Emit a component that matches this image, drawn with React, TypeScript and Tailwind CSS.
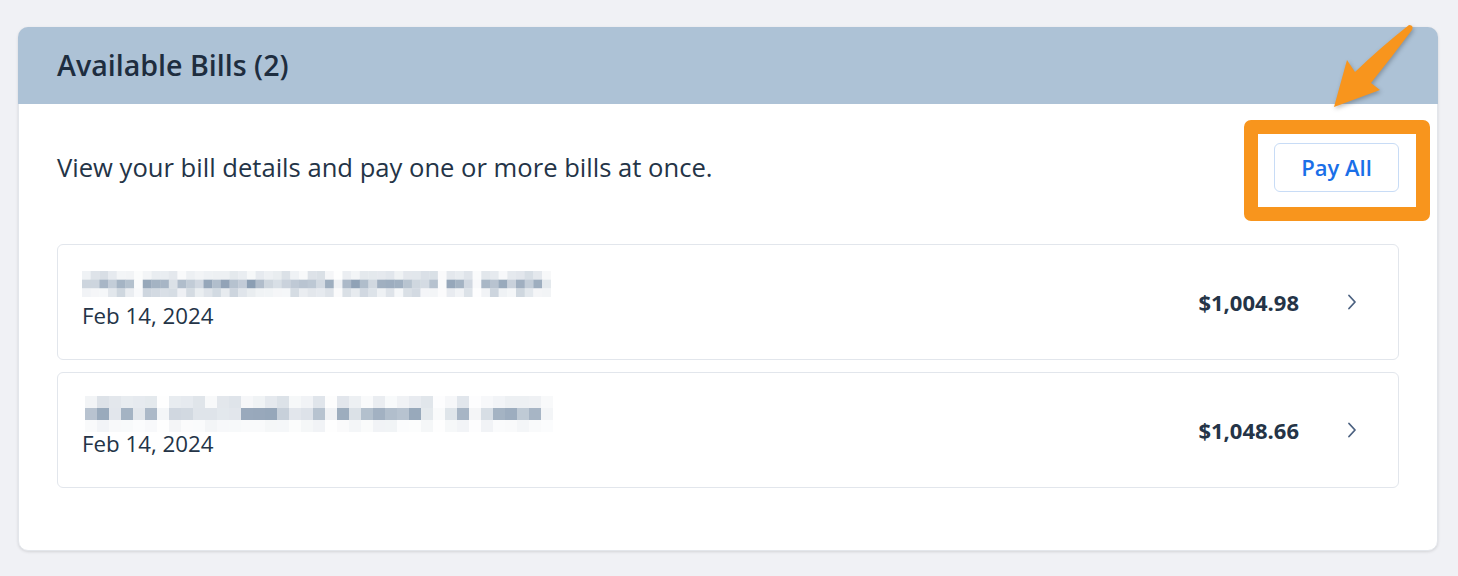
import React from "react";

const rand = (i: number, r: number, s: number) => {
  const x = Math.sin(i * 12.9898 + r * 78.233 + s * 37.719) * 43758.5453;
  return x - Math.floor(x);
};

const mix = (t: number) => {
  const d = [138, 157, 178];
  const c = d.map((v) => Math.round(255 + (v - 255) * t));
  return `rgb(${c[0]},${c[1]},${c[2]})`;
};

type BlurProps = {
  cols: number;
  size: number;
  seed: number;
  ranges: [number, number][];
  gaps: number[];
};

function Blur({ cols, size, seed, ranges, gaps }: BlurProps) {
  const rects: React.ReactNode[] = [];
  for (let r = 0; r < 3; r++) {
    for (let i = 0; i < cols; i++) {
      const [lo, hi] = ranges[r];
      let t = lo + (hi - lo) * rand(i, r, seed);
      if (gaps.includes(i)) t *= 0.15;
      if (i === cols - 1) t *= 0.3;
      rects.push(
        <rect
          key={`${r}-${i}`}
          x={i * size}
          y={r * size}
          width={size + 0.3}
          height={size + 0.3}
          fill={mix(t)}
        />
      );
    }
  }
  return (
    <svg width={cols * size} height={3 * size} className="block">
      {rects}
    </svg>
  );
}

function Chevron() {
  return (
    <svg width="10" height="16" viewBox="0 0 10 16" className="block">
      <path d="M2 1.5 L8 8 L2 14.5" fill="none" stroke="#4b6180" strokeWidth="1.8" strokeLinecap="round" strokeLinejoin="round" />
    </svg>
  );
}

function BillRow({ amount, variant }: { amount: string; variant: 1 | 2 }) {
  return (
    <div className="h-[116px] border border-[#e2e6ec] rounded-[6px] flex justify-between pl-[24px] pr-[41px] bg-white">
      {variant === 1 ? (
        <div className="pt-[26px] flex flex-col">
          <Blur
            cols={54}
            size={8.68}
            seed={3}
            ranges={[
              [0.05, 0.35],
              [0.25, 1.0],
              [0.08, 0.45],
            ]}
            gaps={[6, 29, 41, 45]}
          />
          <div className="mt-[4px] text-[22.3px] leading-[30px] text-[#243447]">Feb 14, 2024</div>
        </div>
      ) : (
        <div className="pt-[23px] flex flex-col">
          <div className="ml-[3px]">
            <Blur
              cols={39}
              size={12}
              seed={7}
              ranges={[
                [0.04, 0.3],
                [0.15, 0.9],
                [0.02, 0.12],
              ]}
              gaps={[6, 20, 29, 32]}
            />
          </div>
          <div className="-mt-[3px] text-[22.3px] leading-[30px] text-[#243447]">Feb 14, 2024</div>
        </div>
      )}
      <div className="flex items-center gap-[48px]">
        <div className="text-[22px] font-bold text-[#243447]">{amount}</div>
        <Chevron />
      </div>
    </div>
  );
}

export default function App() {
  return (
    <div className="relative w-full h-[576px] bg-[#f0f1f5] pt-[27px] pl-[18px] font-['Open_Sans',sans-serif] overflow-hidden">
      <div className="relative w-[1420px] rounded-[10px] bg-white shadow-[0_1px_3px_rgba(0,0,0,0.12)] border border-[#e3e6eb]">
        <div className="h-[77px] -m-px mb-0 rounded-t-[10px] bg-[#adc2d6] flex items-center px-[39px]">
          <h1 className="text-[28.6px] font-semibold text-[#1e2d3f] leading-none">Available Bills (2)</h1>
        </div>
        <div className="px-[38px] pt-[39px] pb-[62px]">
          <div className="flex items-center justify-between h-[49px]">
            <p className="text-[25.6px] leading-[32px] text-[#243447]">
              View your bill details and pay one or more bills at once.
            </p>
            <div className="relative">
              <button className="h-[49px] w-[125px] border border-[#c8dcf6] rounded-[6px] text-[22px] font-semibold text-[#1a6fe8] bg-white">
                Pay All
              </button>
              <div className="absolute -left-[30px] -right-[31px] -top-[23px] -bottom-[29px] border-[14px] border-[#f8951d] rounded-[7px] pointer-events-none"></div>
            </div>
          </div>
          <div className="mt-[52px] flex flex-col gap-[12px]">
            <BillRow amount="$1,004.98" variant={1} />
            <BillRow amount="$1,048.66" variant={2} />
          </div>
        </div>
      </div>
      <svg
        className="absolute left-[1325px] top-[20px] drop-shadow-[1px_2px_2px_rgba(0,0,0,0.25)]"
        width="95"
        height="95"
        viewBox="0 0 95 95"
      >
        <path d="M9 87 L22 40 L30 52 Q56 27 84 5 Q89 5 87 10 Q66 38 46 63 L55 70 Z" fill="#f8951d" />
      </svg>
    </div>
  );
}
